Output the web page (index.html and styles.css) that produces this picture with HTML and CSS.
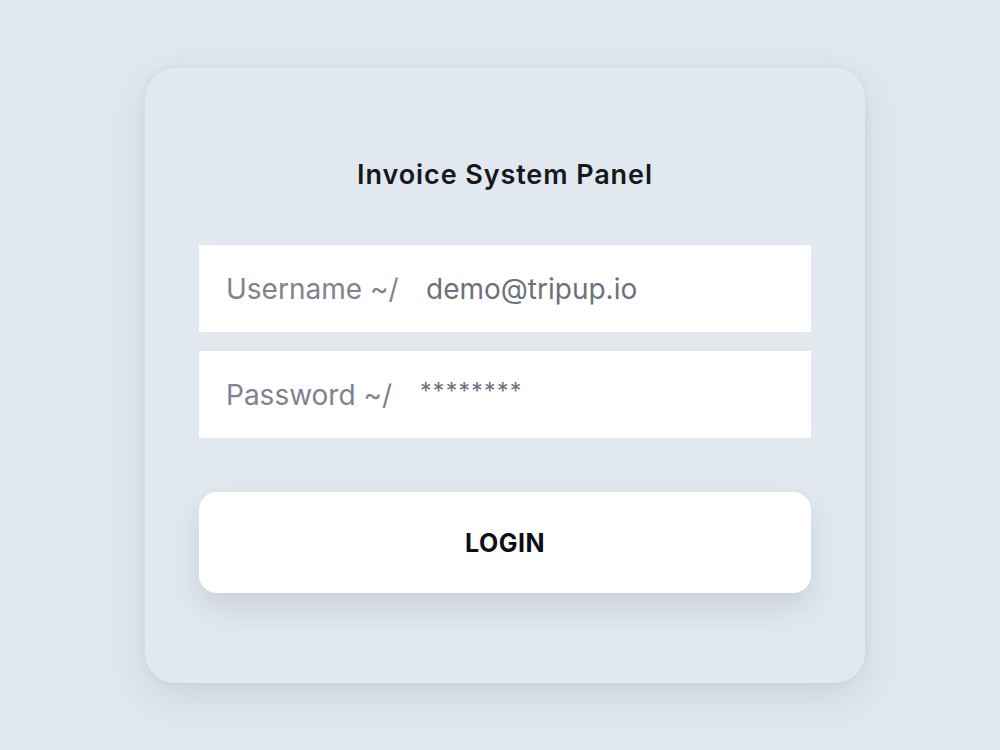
FILE: index.html
```html
<!DOCTYPE html>
<html lang="en">
<head>
    <meta charset="UTF-8">
    <meta name="viewport" content="width=device-width, initial-scale=1.0">
    <title>Invoice System Panel</title>
    <link rel="stylesheet" href="styles.css">
</head>
<body>
    <div class="panel">
        <h2 class="title">Invoice System Panel</h2>
        <div class="field">
            <span class="label">Username ~/</span>
            <span class="value">demo@tripup.io</span>
        </div>
        <div class="field">
            <span class="label">Password ~/</span>
            <span class="value stars">********</span>
        </div>
        <button class="login">LOGIN</button>
    </div>
</body>
</html>
```

FILE: styles.css
```css
body {
    margin: 0;
    background: #e1e8ef;
    font-family: Inter, "Open Sans", "Liberation Sans", sans-serif;
    padding: 68px 0 0 145px;
    height: 750px;
    box-sizing: border-box;
}

.panel {
    width: 720px;
    height: 615px;
    box-sizing: border-box;
    padding: 91px 54px 0 54px;
    background: #e2e8ef;
    border-radius: 30px;
    box-shadow: 0 14px 40px rgba(150, 165, 185, 0.3), 0 0 6px rgba(170, 180, 195, 0.2);
}

.title {
    margin: 0 0 54px 0;
    text-align: center;
    font-size: 27px;
    line-height: 32px;
    font-weight: 600;
    letter-spacing: 0.9px;
    color: #16181c;
}

.field {
    height: 87px;
    background: #fff;
    margin-bottom: 19px;
    display: flex;
    align-items: center;
    padding-left: 27px;
    font-size: 28px;
}

.label {
    width: 200px;
    color: #80838f;
}

.value {
    color: #6d717d;
}

.stars {
    font-size: 23px;
    margin-left: -6px;
    margin-top: -8px;
    letter-spacing: 1.3px;
}

.login {
    display: block;
    width: 100%;
    height: 101px;
    margin-top: 54px;
    border: 0;
    border-radius: 18px;
    background: #fff;
    font-family: inherit;
    font-size: 25px;
    font-weight: 700;
    letter-spacing: 0.5px;
    color: #0e0f12;
    cursor: pointer;
    box-shadow: 0 14px 30px rgba(140, 155, 175, 0.3);
}
```
